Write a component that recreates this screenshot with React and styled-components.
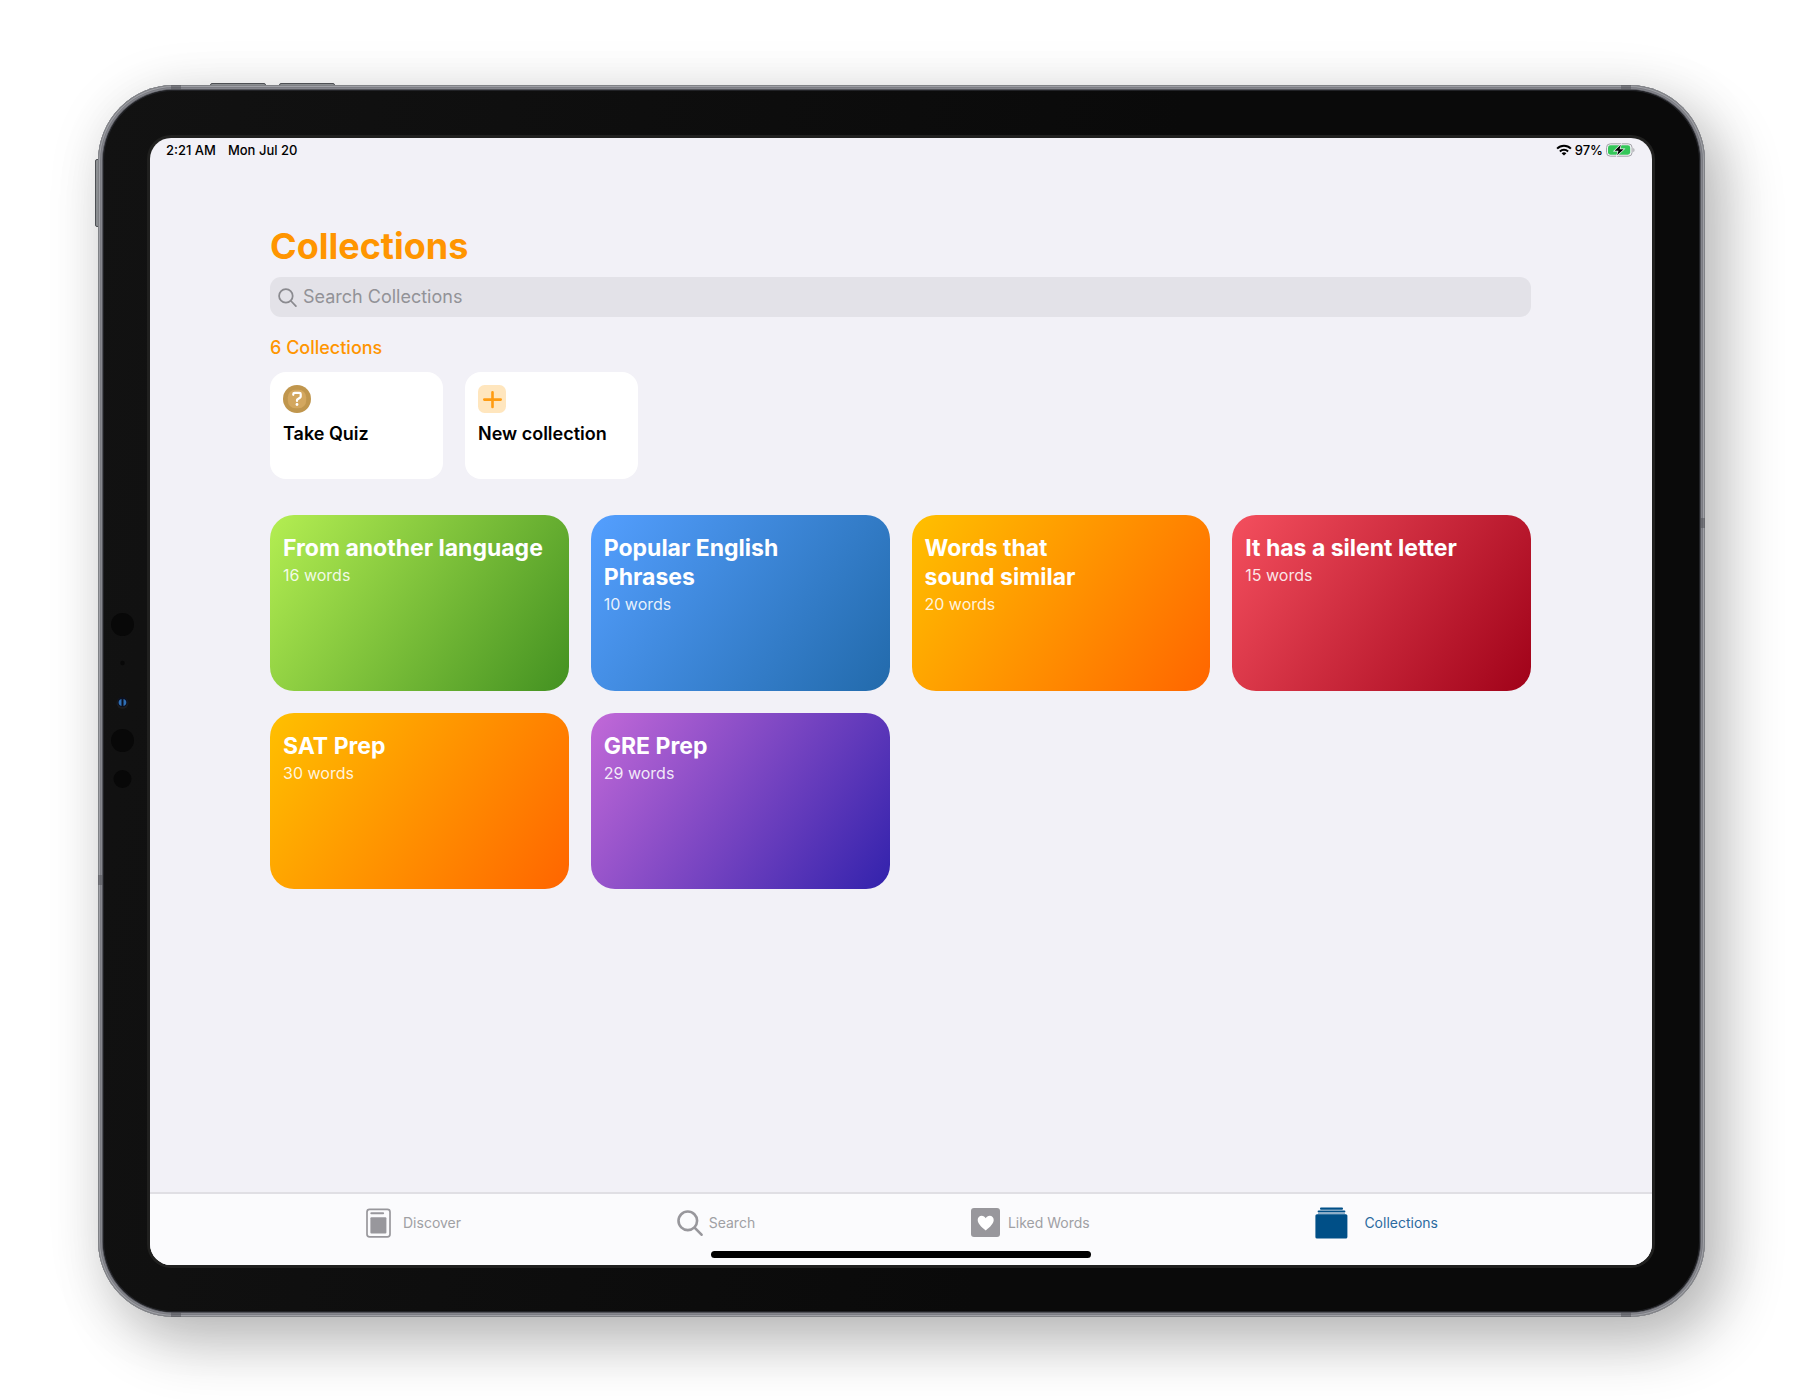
import React from "react";
import styled, { createGlobalStyle, css } from "styled-components";

const GlobalStyle = createGlobalStyle`
  * { box-sizing: border-box; }
  body {
    margin: 0;
    background: #fff;
    color: #000;
    font-family: Inter, "Liberation Sans", sans-serif;
  }
  button, input { font: inherit; color: inherit; }
  h1, h2, p { margin: 0; }
`;

const Stage = styled.div`
  display: flex;
  min-height: 100vh;
  padding: 85px 95px 83px 98px;
  overflow: hidden;
  isolation: isolate;
  background: #fff;
`;

const Device = styled.div`
  position: relative;
  display: flex;
  flex: 1;
  padding: 5px;
  border-radius: 76px;
  background: #55565c;
  box-shadow:
    inset 0 0 0 1px #808286,
    inset 0 0 0 2px #9fa0a6,
    inset 0 0 0 3px #7b7c82,
    inset 0 0 0 4px #85868d,
    20px 26px 60px rgba(0, 0, 0, 0.24),
    4px 8px 60px rgba(0, 0, 0, 0.1);
`;

const Bezel = styled.div`
  display: flex;
  flex: 1;
  padding: 48px 48px 47px 47px;
  border-radius: 71px;
  background: linear-gradient(100deg, #121212, #0a0a0a 60%);
  box-shadow: inset 0 0 0 1px #222327;
`;

const Screen = styled.div`
  display: flex;
  flex: 1;
  flex-direction: column;
  overflow: hidden;
  border-radius: 21px;
  background: #f2f1f7;
  box-shadow: 0 0 0 3px #20201f;
`;

const sideKey = css`
  position: absolute;
  z-index: -1;
  border: 1px solid #55585c;
  background: #9a9da0;
`;

const TopKey = styled.span`
  ${sideKey}
  top: -2px;
  left: ${(p) => p.$at}px;
  width: 56px;
  height: 4px;
  border-radius: 2px 2px 0 0;
`;

const LeftKey = styled.span`
  ${sideKey}
  top: 74px;
  left: -3px;
  width: 4px;
  height: 68px;
  border-radius: 2px 0 0 2px;
`;

const Band = styled.span`
  position: absolute;
  background: rgba(80, 80, 86, 0.5);
  ${(p) =>
    p.$edge === "top" || p.$edge === "bottom"
      ? css`width: 10px; height: 5px;`
      : css`width: 5px; height: 10px;`}
  ${(p) => p.$edge}: 0;
  ${(p) => p.$from}: ${(p) => p.$at}px;
`;

const Sensors = styled.span`
  position: absolute;
  top: 50%;
  left: 12px;
  display: flex;
  height: 180px;
  margin-top: -90px;
`;

const StatusBar = styled.header`
  display: flex;
  align-items: center;
  justify-content: space-between;
  height: 24px;
  padding: 0 17px 0 16px;
  font-size: 13px;
  font-weight: 500;
  line-height: 24px;
`;

const StatusGroup = styled.div`
  display: flex;
  align-items: center;
  gap: ${(p) => p.$gap}px;
`;

const Content = styled.main`
  display: flex;
  flex: 1;
  flex-direction: column;
  padding: 61px 121px 24px 120px;
`;

const PageTitle = styled.h1`
  color: #ff9500;
  font-size: 36px;
  font-weight: 700;
  line-height: 46px;
`;

const SearchBox = styled.label`
  display: flex;
  align-items: center;
  gap: 6px;
  height: 40px;
  margin-top: 8px;
  padding: 0 8px;
  border-radius: 11px;
  background: #e3e2e8;
  color: #8a8a8f;
`;

const SearchInput = styled.input`
  flex: 1;
  min-width: 0;
  padding: 0;
  border: 0;
  outline: 0;
  background: transparent;
  color: #1c1c1e;
  font-size: 18px;
  line-height: 24px;
  &::placeholder { color: #929297; opacity: 1; }
`;

const Count = styled.p`
  margin-top: 19px;
  color: #ff9500;
  font-size: 18px;
  font-weight: 500;
  line-height: 24px;
`;

const Actions = styled.div`
  display: flex;
  gap: 22px;
  margin-top: 12px;
`;

const ActionCard = styled.button`
  display: flex;
  flex-direction: column;
  align-items: flex-start;
  gap: 9px;
  width: 173px;
  height: 107px;
  padding: 13px;
  border: 0;
  border-radius: 16px;
  background: #fff;
  font-size: 18px;
  font-weight: 600;
  line-height: 24px;
  white-space: nowrap;
  cursor: pointer;
`;

const CardGrid = styled.div`
  display: grid;
  grid-template-columns: repeat(4, minmax(0, 1fr));
  gap: 22px;
  margin-top: 36px;
`;

const CollectionCard = styled.a`
  display: block;
  min-height: 176px;
  padding: 19px 13px;
  border-radius: 24px;
  background: linear-gradient(125deg, ${(p) => p.$from}, ${(p) => p.$to});
  color: #fff;
  text-decoration: none;
`;

const CardTitle = styled.h2`
  font-size: 23px;
  font-weight: 700;
  line-height: 29px;
  white-space: pre-line;
`;

const CardCount = styled.p`
  color: rgba(255, 255, 255, 0.88);
  font-size: 16px;
  line-height: 24px;
`;

const TabBar = styled.nav`
  border-top: 2px solid #e0dfe4;
  background: #fbfbfd;
`;

const Tabs = styled.div`
  display: flex;
  justify-content: space-between;
  height: 57px;
  padding: 0 214px 0 216px;
`;

const Tab = styled.a`
  display: flex;
  align-items: center;
  gap: ${(p) => p.$gap}px;
  padding-left: ${(p) => (p.$active ? 10 : 0)}px;
  color: ${(p) => (p.$active ? "#2b6a9f" : "#a0a0a4")};
  font-size: 14px;
  line-height: 20px;
  text-decoration: none;
  svg { color: ${(p) => (p.$active ? "#004f87" : "#98979c")}; }
`;

const HomeIndicator = styled.div`
  width: 380px;
  height: 7px;
  margin: 0 auto 7px;
  border-radius: 4px;
  background: #000;
`;

const WifiIcon = () => (
  <svg width="16" height="12" viewBox="0 0 16 12" aria-hidden="true">
    <g fill="none" stroke="#000" strokeWidth="2">
      <path d="M1.1 4.6a9.8 9.8 0 0 1 13.8 0" />
      <path d="M3.9 7.5a5.9 5.9 0 0 1 8.2 0" />
    </g>
    <path d="M8 11.6 5.6 9.3a3.5 3.5 0 0 1 4.8 0z" />
  </svg>
);

const BatteryIcon = () => (
  <svg width="29" height="14" viewBox="0 0 29 14" aria-hidden="true">
    <rect x="0.5" y="0.8" width="25.6" height="12.4" rx="3.8" fill="none" stroke="#a3a3a7" />
    <path d="M27.3 4.9c1.6.6 1.6 3.6 0 4.2z" fill="#a3a3a7" />
    <rect x="2" y="2.3" width="22.2" height="9.4" rx="2.4" fill="#34c759" />
    <path d="M14.8 1.8 8.6 7.7h3.9l-1.4 4.6 6.6-6.1h-4.1z" fill="#000" stroke="#f2f1f7" strokeWidth="1.4" paintOrder="stroke" />
  </svg>
);

const MagnifierIcon = ({ size, weight }) => (
  <svg width={size} height={size} viewBox="0 0 26 26" fill="none" stroke="currentColor" strokeWidth={weight} strokeLinecap="round" aria-hidden="true">
    <circle cx="10.8" cy="10.8" r="9.3" />
    <path d="m17.8 17.8 6.7 6.9" />
  </svg>
);

const QuizIcon = () => (
  <svg width="28" height="28" viewBox="0 0 28 28" aria-hidden="true">
    <circle cx="14" cy="14" r="14" fill="#c0964d" />
    <rect x="4.8" y="4.8" width="18.4" height="18.4" rx="7.5" fill="#d3a75f" />
    <path d="M10.3 9.8V9.1q0-1.3 1.3-1.3h4.8q1.3 0 1.3 1.3v2.3q0 .9-.8 1.4l-2.3 1.4q-.6.4-.6 1.1v.7" fill="none" stroke="#fff" strokeWidth="2.2" strokeLinejoin="round" strokeLinecap="round" />
    <circle cx="14" cy="19.5" r="1.4" fill="#fff" />
  </svg>
);

const PlusIcon = () => (
  <svg width="28" height="28" viewBox="0 0 28 28" aria-hidden="true">
    <rect width="28" height="28" rx="6.5" fill="#ffe6be" />
    <path d="M6.3 14.6h16.4M14.5 7.2v14.8" stroke="#ff9c12" strokeWidth="2.6" strokeLinecap="round" />
  </svg>
);

const DiscoverIcon = () => (
  <svg width="25" height="30" viewBox="0 0 25 30" aria-hidden="true">
    <rect x="1" y="1.4" width="23" height="27.4" rx="2.6" fill="none" stroke="currentColor" strokeWidth="1.7" />
    <path d="M5.3 5.2h11.8" stroke="currentColor" strokeWidth="2" strokeLinecap="round" />
    <rect x="4.4" y="9.2" width="16" height="16.2" rx="1" fill="currentColor" />
  </svg>
);

const LikedIcon = () => (
  <svg width="29" height="29" viewBox="0 0 29 29" aria-hidden="true">
    <rect width="29" height="29" rx="3" fill="currentColor" />
    <path d="M14.7 22.4C10 18.6 6.7 15.6 6.7 12c0-2.5 1.7-4.3 4-4.3 1.7 0 3.2 1 4 2.6.8-1.6 2.3-2.6 4-2.6 2.3 0 4 1.8 4 4.3 0 3.6-3.3 6.6-8 10.4z" fill="#fff" />
  </svg>
);

const CollectionsIcon = () => (
  <svg width="33" height="32" viewBox="0 0 33 32" aria-hidden="true">
    <rect x="5" y="0.4" width="23" height="2.3" rx="1" fill="currentColor" />
    <rect x="2.6" y="3.4" width="27.8" height="2.2" rx="1" fill="currentColor" />
    <path d="M3 5.4h27v2H3z" fill="#8fafc9" />
    <rect x="0.4" y="7.2" width="32" height="24.3" rx="1.6" fill="currentColor" />
  </svg>
);

const SensorArt = () => (
  <svg width="24" height="180" viewBox="0 0 24 180" aria-hidden="true">
    <g fill="#080808">
      <circle cx="12.5" cy="13.5" r="11.5" />
      <circle cx="12.5" cy="52" r="2.2" />
      <circle cx="12.5" cy="129.5" r="11.5" />
      <circle cx="12.5" cy="168" r="9" />
    </g>
    <circle cx="12.5" cy="92" r="6" fill="#1c1c1e" />
    <circle cx="12.5" cy="91" r="5" fill="#0b1020" />
    <path d="M11.5 88c-3.8.4-3.8 6.6 0 7zM13.5 88c3.8.4 3.8 6.6 0 7z" fill="#2f6fb4" />
  </svg>
);

const collections = [
  { title: "From another language", words: 16, from: "#b4ee52", to: "#439121" },
  { title: "Popular English\nPhrases", words: 10, from: "#549fff", to: "#226aab" },
  { title: "Words that\nsound similar", words: 20, from: "#ffc000", to: "#ff6500" },
  { title: "It has a silent letter", words: 15, from: "#f44f5e", to: "#a00219" },
  { title: "SAT Prep", words: 30, from: "#ffc000", to: "#ff6500" },
  { title: "GRE Prep", words: 29, from: "#c269d8", to: "#3222ac" },
];

const bands = [
  { edge: "top", from: "left", at: 73 },
  { edge: "top", from: "right", at: 74 },
  { edge: "bottom", from: "left", at: 73 },
  { edge: "bottom", from: "right", at: 74 },
  { edge: "left", from: "bottom", at: 432 },
  { edge: "right", from: "top", at: 433 },
];

export default function App() {
  return (
    <>
      <GlobalStyle />
      <Stage>
        <Device>
          <TopKey $at={112} />
          <TopKey $at={181} />
          <LeftKey />
          {bands.map((b) => (
            <Band key={b.edge + b.from} $edge={b.edge} $from={b.from} $at={b.at} />
          ))}
          <Bezel>
            <Screen>
              <StatusBar>
                <StatusGroup $gap={12}>
                  <span>2:21 AM</span>
                  <span>Mon Jul 20</span>
                </StatusGroup>
                <StatusGroup $gap={3}>
                  <WifiIcon />
                  <span>97%</span>
                  <BatteryIcon />
                </StatusGroup>
              </StatusBar>
              <Content>
                <PageTitle>Collections</PageTitle>
                <SearchBox>
                  <MagnifierIcon size={19} weight={2.4} />
                  <SearchInput type="search" placeholder="Search Collections" aria-label="Search Collections" />
                </SearchBox>
                <Count>6 Collections</Count>
                <Actions>
                  <ActionCard type="button"><QuizIcon />Take Quiz</ActionCard>
                  <ActionCard type="button"><PlusIcon />New collection</ActionCard>
                </Actions>
                <CardGrid>
                  {collections.map((c) => (
                    <CollectionCard key={c.title} href="#" $from={c.from} $to={c.to}>
                      <CardTitle>{c.title}</CardTitle>
                      <CardCount>{c.words} words</CardCount>
                    </CollectionCard>
                  ))}
                </CardGrid>
              </Content>
              <TabBar>
                <Tabs>
                  <Tab href="#" $gap={12}><DiscoverIcon />Discover</Tab>
                  <Tab href="#" $gap={6}><MagnifierIcon size={26} weight={2.6} />Search</Tab>
                  <Tab href="#" $gap={8}><LikedIcon />Liked Words</Tab>
                  <Tab href="#" $gap={16} $active aria-current="page"><CollectionsIcon />Collections</Tab>
                </Tabs>
                <HomeIndicator />
              </TabBar>
            </Screen>
          </Bezel>
          <Sensors><SensorArt /></Sensors>
        </Device>
      </Stage>
    </>
  );
}
